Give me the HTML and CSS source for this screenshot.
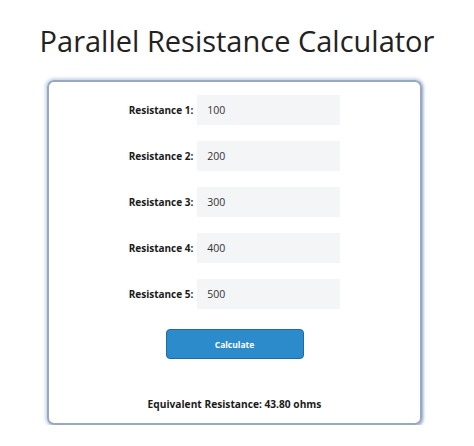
FILE: index.html
```html
<!DOCTYPE html>
<html>
<head>
<meta charset="utf-8">
<link rel="stylesheet" href="styles.css">
</head>
<body>
<h1 class="title">Parallel Resistance Calculator</h1>
<div class="card">
  <div class="form">
    <label class="label">Resistance 1:</label><div class="input">100</div>
    <label class="label">Resistance 2:</label><div class="input">200</div>
    <label class="label">Resistance 3:</label><div class="input">300</div>
    <label class="label">Resistance 4:</label><div class="input">400</div>
    <label class="label">Resistance 5:</label><div class="input">500</div>
  </div>
  <button class="btn">Calculate</button>
  <p class="result">Equivalent Resistance: 43.80 ohms</p>
</div>
</body>
</html>
```
FILE: styles.css
```css
html, body {
  margin: 0;
  padding: 0;
  background: #ffffff;
}
body {
  font-family: "Open Sans", "Noto Sans", sans-serif;
  color: #1a1a1a;
  display: flex;
  flex-direction: column;
  align-items: center;
}
.title {
  font-weight: 400;
  font-size: 29px;
  margin: 21px 0 0 0;
  height: 59px;
  line-height: 40px;
  color: #222;
  letter-spacing: 0;
}
.card {
  width: 371px;
  height: 328px;
  margin-right: 5px;
  box-sizing: content-box;
  border: 2px solid #98a8bf;
  border-radius: 7px;
  box-shadow: 0 0 3px 2px rgba(160, 185, 220, 0.55), 1px 1px 2px rgba(90,110,140,0.5);
  display: flex;
  flex-direction: column;
  align-items: center;
  padding-top: 13px;
}
.form {
  display: grid;
  grid-template-columns: auto 143px;
  column-gap: 4px;
  row-gap: 16px;
  align-items: center;
}
.label {
  justify-self: end;
  font-weight: 700;
  font-size: 10px;
  color: #1a1a1a;
}
.input {
  height: 30px;
  background: #f4f5f7;
  font-size: 10.5px;
  line-height: 30px;
  padding-left: 10px;
  color: #333;
}
.btn {
  margin-top: 20px;
  width: 138px;
  height: 30px;
  background: #2b8bcb;
  border: 1px solid #1d6aa6;
  border-radius: 4px;
  color: #fff;
  font-family: "Open Sans", sans-serif;
  font-weight: 700;
  font-size: 8.5px;
}
.result {
  margin: 38px 0 0 0;
  font-weight: 700;
  font-size: 10.2px;
  color: #1a1a1a;
}
```
